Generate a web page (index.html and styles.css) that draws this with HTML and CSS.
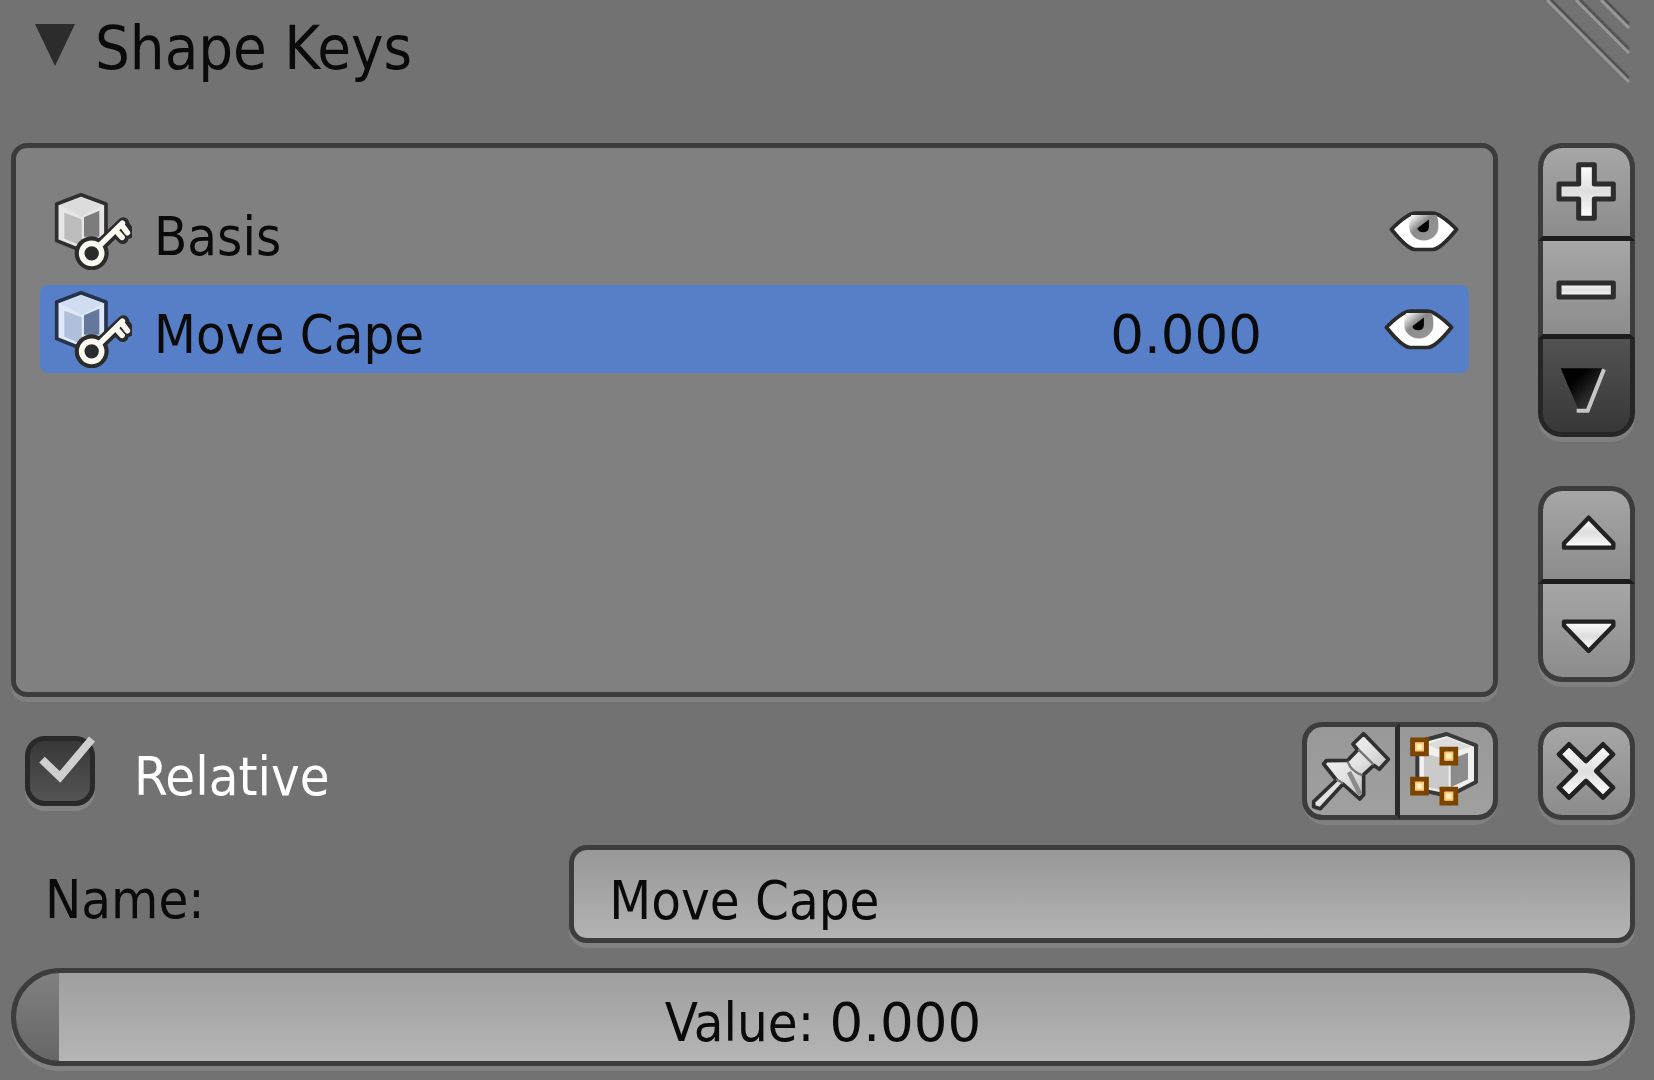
FILE: index.html
```html
<!DOCTYPE html>
<html lang="en">
<head>
<meta charset="utf-8">
<meta name="viewport" content="width=device-width, initial-scale=1">
<title>Shape Keys</title>
<link rel="stylesheet" href="styles.css">
</head>
<body>
<svg class="defs" aria-hidden="true">
  <defs>
    <linearGradient id="shine" x1="0" y1="0" x2="0" y2="1">
      <stop offset="0" stop-color="#fff"/><stop offset=".5" stop-color="#dedede"/><stop offset="1" stop-color="#fff"/>
    </linearGradient>
    <linearGradient id="shadow" x1="0" y1="0" x2="1" y2="1">
      <stop offset=".3" stop-color="#000"/><stop offset="1" stop-color="#4a4a4a"/>
    </linearGradient>
    <linearGradient id="metal" x1="0" y1="0" x2="1" y2="1">
      <stop offset="0" stop-color="#fff"/><stop offset=".5" stop-color="#e2e2e2"/><stop offset="1" stop-color="#999"/>
    </linearGradient>
    <linearGradient id="iris" x1="0" y1="0" x2="1" y2="1">
      <stop offset=".1" stop-color="#eee"/><stop offset=".4" stop-color="#8a8a8a"/><stop offset="1" stop-color="#999"/>
    </linearGradient>
    <symbol id="key" viewBox="72 66 234 234">
      <path d="M185 250 280 160M260 184l18 20M280 164l16 24" fill="none" stroke="#2b2b2b" stroke-width="36" stroke-linecap="round" stroke-linejoin="round"/>
      <circle cx="185" cy="250" r="51" fill="#2b2b2b"/>
      <path d="M208 227 277 160M260 184l16 18M276 166l16 22" fill="none" stroke="#fbf9f2" stroke-width="17" stroke-linecap="round"/>
      <circle cx="185" cy="250" r="30" fill="none" stroke="#fbf9f2" stroke-width="17"/>
    </symbol>
    <symbol id="eye" viewBox="930 93 207 120">
      <path d="M937 147Q985 99 1008 99H1058Q1082 99 1130 147Q1082 207 1058 207H1008Q985 207 937 147Z" fill="#fff" stroke="#2b2b2b" stroke-width="11" stroke-linejoin="round"/>
      <path d="M996 105H1070Q1076 112 1076 140A43 40 0 0 1 990 140Q990 112 996 105Z" fill="url(#iris)"/>
      <path d="M1048 118V142Q1046 156 1032 156Q1016 156 1014 144Z" fill="#000"/>
    </symbol>
  </defs>
</svg>

<main class="panel">
  <header class="panel-header">
    <svg class="disclosure" viewBox="0 0 40 42" aria-hidden="true"><path d="M0 0H40L20 42Z" fill="#2c2c2c"/></svg>
    <h1 class="title">Shape Keys</h1>
    <svg class="grip" viewBox="0 0 84 84" aria-hidden="true">
      <path d="M5 0 83 78M34 0 83 49M59 0 83 24" stroke="#545454" stroke-width="3"/>
      <path d="M1 0 83 82M30 0 83 53M55 0 83 28" stroke="#989898" stroke-width="3"/>
    </svg>
  </header>

  <section class="keys">
    <ul class="list">
      <li class="row">
        <svg class="icon" viewBox="72 66 234 234" aria-hidden="true">
          <path d="M153 74 80 102V212L150 240 228 200V102Z" fill="#e6e6e6" stroke="#2f2f2f" stroke-width="11" stroke-linejoin="round"/>
          <path d="M153 82 90 106 155 140 220 106Z" fill="#dcdcdc"/>
          <path d="M103 128 155 148V228L103 206Z" fill="#bcbcbc"/>
          <path d="M162 142 208 122V200H162Z" fill="#7c7c7c"/>
          <use href="#key" x="72" y="66" width="234" height="234"/>
        </svg>
        <span class="text">Basis</span>
        <button class="eye" type="button" aria-label="Toggle Basis"><svg viewBox="930 93 207 120"><use href="#eye" x="930" y="93" width="207" height="120"/></svg></button>
      </li>
      <li class="row selected">
        <svg class="icon" viewBox="72 66 234 234" aria-hidden="true">
          <path d="M153 74 80 102V212L150 240 228 200V102Z" fill="#dfe8f8" stroke="#26334c" stroke-width="11" stroke-linejoin="round"/>
          <path d="M153 82 90 106 155 140 220 106Z" fill="#cfdcf2"/>
          <path d="M103 128 155 148V228L103 206Z" fill="#b0bfda"/>
          <path d="M162 142 208 122V200H162Z" fill="#64789c"/>
          <use href="#key" x="72" y="66" width="234" height="234"/>
        </svg>
        <span class="text">Move Cape</span>
        <input class="text number" type="text" value="0.000" aria-label="Move Cape value">
        <button class="eye" type="button" aria-label="Toggle Move Cape"><svg viewBox="930 93 207 120"><use href="#eye" x="930" y="93" width="207" height="120"/></svg></button>
      </li>
    </ul>

    <div class="tools">
      <div class="stack">
        <button class="btn" type="button" aria-label="Add">
          <svg class="icon" viewBox="84 69 234 234"><path d="M176 104H223V162H280V207H223V265H176V207H117V162H176Z" fill="url(#shine)" stroke="#2d2d2d" stroke-width="15" stroke-linejoin="round"/></svg>
        </button>
        <button class="btn" type="button" aria-label="Remove">
          <svg class="icon" viewBox="84 363 234 234"><path d="M117 459H280V501H117Z" fill="url(#shine)" stroke="#2d2d2d" stroke-width="15" stroke-linejoin="round"/></svg>
        </button>
        <button class="btn dark" type="button" aria-label="Specials">
          <svg class="icon" viewBox="84 657 234 234"><path d="M122 715H247L198 836H174Z" fill="url(#shadow)"/><path d="M252 718 203 842H170" fill="none" stroke="#c6c6c6" stroke-width="12"/></svg>
        </button>
      </div>
      <div class="stack">
        <button class="btn" type="button" aria-label="Move up">
          <svg class="icon" viewBox="84 78 234 234"><path d="M206 143 280 220V233H132V220Z" fill="url(#shine)" stroke="#222" stroke-width="13" stroke-linejoin="round"/></svg>
        </button>
        <button class="btn" type="button" aria-label="Move down">
          <svg class="icon" viewBox="84 372 234 234"><path d="M206 543 280 467V455H132V467Z" fill="url(#shine)" stroke="#222" stroke-width="13" stroke-linejoin="round"/></svg>
        </button>
      </div>
    </div>
  </section>

  <section class="options">
    <label class="check">
      <span class="box">
        <input type="checkbox" checked>
        <svg viewBox="75 227 210 210" aria-hidden="true"><path d="M126 298 180 350 276 236" fill="none" stroke="#cfcfcf" stroke-width="24"/></svg>
      </span>
      <span class="text light">Relative</span>
    </label>
    <div class="pair">
      <button class="btn" type="button" aria-label="Pin shape">
        <svg class="icon" viewBox="93 96 234 234">
          <path d="M248 101 322 178 295 208 278 196 248 224V284L236 297 186 252 118 326 98 320V305L166 240 128 192 136 182 200 181 230 150 216 132Z" fill="url(#metal)" stroke="#303030" stroke-width="11" stroke-linejoin="round"/>
          <path d="M186 250 166 238M200 184Q208 212 244 226M232 148 278 194" fill="none" stroke="#777" stroke-width="7"/>
          <path d="M204 216 238 284" stroke="#8a8a8a" stroke-width="14"/>
        </svg>
      </button>
      <button class="btn" type="button" aria-label="Edit mode shape">
        <svg class="icon" viewBox="390 96 234 234">
          <path d="M500 102 588 136V246L506 288 412 268V126Z" fill="#f0f0f0" stroke="#3a3a3a" stroke-width="12" stroke-linejoin="round"/>
          <path d="M500 112 440 134 505 160 574 140Z" fill="#dcdcdc"/>
          <path d="M432 160 506 180V276L432 258Z" fill="#cacaca"/>
          <path d="M512 178 564 158V238L512 262Z" fill="#8c8c8c"/>
          <g fill="#fff2c8" stroke="#7b4500" stroke-width="15">
            <path d="M398 120H439V161H398ZM486 148H527V189H486ZM398 238H439V279H398ZM486 268H527V309H486Z"/>
          </g>
          <g fill="none" stroke="#ffc870" stroke-width="5">
            <path d="M408 130H429V151H408ZM496 158H517V179H496ZM408 248H429V269H408ZM496 278H517V299H496Z"/>
          </g>
        </svg>
      </button>
    </div>
    <div class="stack">
      <button class="btn" type="button" aria-label="Clear weights">
        <svg class="icon" viewBox="84 786 234 234"><path d="M147 823 198 873 249 823 279 853 229 903 279 953 249 983 198 933 147 983 117 953 167 903 117 853Z" fill="url(#shine)" stroke="#222" stroke-width="14" stroke-linejoin="round"/></svg>
      </button>
    </div>
  </section>

  <div class="name">
    <label class="text" for="key-name">Name:</label>
    <input class="text field" id="key-name" type="text" value="Move Cape">
  </div>

  <div class="slider">
    <input id="key-value" type="range" min="0" max="1" step="0.001" value="0">
    <label class="text" for="key-value">Value: <span class="digits">0.000</span></label>
  </div>
</main>
</body>
</html>
```
FILE: styles.css
```css
* {
  box-sizing: border-box;
}

body {
  margin: 0;
  background: #727272;
  color: #0a0a0a;
  font: 54px/64px "DejaVu Sans Condensed", "DejaVu Sans", sans-serif;
}

button,
input {
  margin: 0;
  padding: 0;
  border: 0;
  background: none;
  color: inherit;
  font: inherit;
  appearance: none;
}

svg {
  display: block;
}

.defs {
  position: absolute;
  width: 0;
  height: 0;
}

.panel {
  padding: 0 19px 14px 11px;
}

.panel-header {
  display: flex;
  align-items: flex-start;
  height: 143px;
  padding: 0 5px 0 24px;
}

.disclosure {
  width: 40px;
  height: 42px;
  margin-top: 24px;
}

.title {
  flex: 1;
  margin: 13px 0 0 20px;
  font-size: 61px;
  font-weight: normal;
  line-height: 70px;
}

.grip {
  width: 84px;
  height: 84px;
}

.text {
  padding-top: 12px;
  white-space: nowrap;
}

.light {
  color: #fff;
}

.number,
.digits {
  font-family: "DejaVu Sans", sans-serif;
  font-size: 53px;
}

.icon {
  width: 78px;
  height: 78px;
  overflow: visible;
}

/* key list */
.keys {
  display: flex;
  align-items: flex-start;
  gap: 40px;
}

.list {
  display: flex;
  flex: 1;
  flex-direction: column;
  gap: 10px;
  min-height: 554px;
  margin: 0;
  padding: 39px 24px 24px;
  border: 5px solid #3c3c3c;
  border-radius: 16px;
  background: #808080;
  box-shadow: 0 5px 0 #808080;
  list-style: none;
}

.row {
  display: flex;
  align-items: center;
  gap: 22px;
  height: 88px;
  padding: 0 10px 0 14px;
  border-radius: 8px;
}

.selected {
  padding-right: 15px;
  background: #567fc8;
}

.number {
  width: 160px;
  margin-left: auto;
  margin-right: 100px;
  text-align: right;
}

.eye {
  width: 70px;
  height: 40px;
}

span + .eye {
  margin-left: auto;
}

/* buttons */
.tools {
  display: flex;
  flex-direction: column;
  gap: 49px;
}

.stack,
.pair {
  display: flex;
  border-radius: 24px;
  box-shadow: 0 5px 0 #808080;
}

.stack {
  flex-direction: column;
  width: 97px;
}

.btn {
  display: grid;
  place-items: center;
  width: 98px;
  height: 98px;
  border: 5px solid #3c3c3c;
  background: linear-gradient(#a6a6a6, #8c8c8c);
  background-clip: padding-box;
  background-color: #3c3c3c;
}

.stack .btn {
  width: 97px;
}

.pair .btn {
  background-image: linear-gradient(#989898, #a0a0a0);
}

.stack .btn:first-child {
  border-top-left-radius: 24px;
  border-top-right-radius: 24px;
}

.stack .btn:last-child {
  border-bottom-left-radius: 24px;
  border-bottom-right-radius: 24px;
}

.stack .btn:not(:last-child) {
  border-bottom-color: #1c1c1c;
}

.stack .btn:not(:first-child) {
  padding-top: 5px;
  border-top: 0;
}

.pair .btn:first-child {
  border-right-color: #2a2a2a;
  border-radius: 20px 0 0 20px;
}

.pair .btn:last-child {
  padding-left: 5px;
  border-left: 0;
  border-radius: 0 20px 20px 0;
}

.stack .btn.dark {
  border-color: #262626;
  background-image: linear-gradient(#525252, #383838);
}

/* options */
.options {
  display: flex;
  align-items: center;
  margin-top: 25px;
}

.check {
  display: flex;
  flex: 1;
  align-items: center;
  gap: 39px;
  padding-left: 14px;
}

.box,
.slider {
  display: grid;
}

.box > *,
.slider > * {
  grid-area: 1 / 1;
}

.box input {
  width: 70px;
  height: 70px;
  border: 5px solid #292929;
  border-radius: 20px;
  background: linear-gradient(#383838, #545454);
  box-shadow: 0 5px 0 #848484;
}

.box svg {
  width: 70px;
  height: 70px;
  overflow: visible;
  pointer-events: none;
}

.pair {
  margin-right: 40px;
}

/* name and value */
.name {
  display: grid;
  grid-template-columns: 11fr 21fr;
  align-items: center;
  margin-top: 25px;
}

.name label {
  padding-left: 34px;
}

.field {
  width: 100%;
  height: 98px;
  padding-left: 35px;
  border: 5px solid #3c3c3c;
  border-radius: 18px;
  background: linear-gradient(#989898, #b3b3b3);
  box-shadow: 0 5px 0 #828282;
}

.slider {
  align-items: center;
  justify-items: center;
  margin-top: 25px;
}

.slider input {
  width: 100%;
  height: 98px;
  border: 5px solid #3c3c3c;
  border-radius: 49px;
  background:
    linear-gradient(#808080, #666) left / 43px 100% no-repeat,
    linear-gradient(#9f9f9f, #b5b5b5);
  box-shadow: 0 5px 0 #828282;
}

.slider input::-webkit-slider-thumb {
  width: 44px;
  height: 88px;
  appearance: none;
}

.slider label {
  pointer-events: none;
}
```
